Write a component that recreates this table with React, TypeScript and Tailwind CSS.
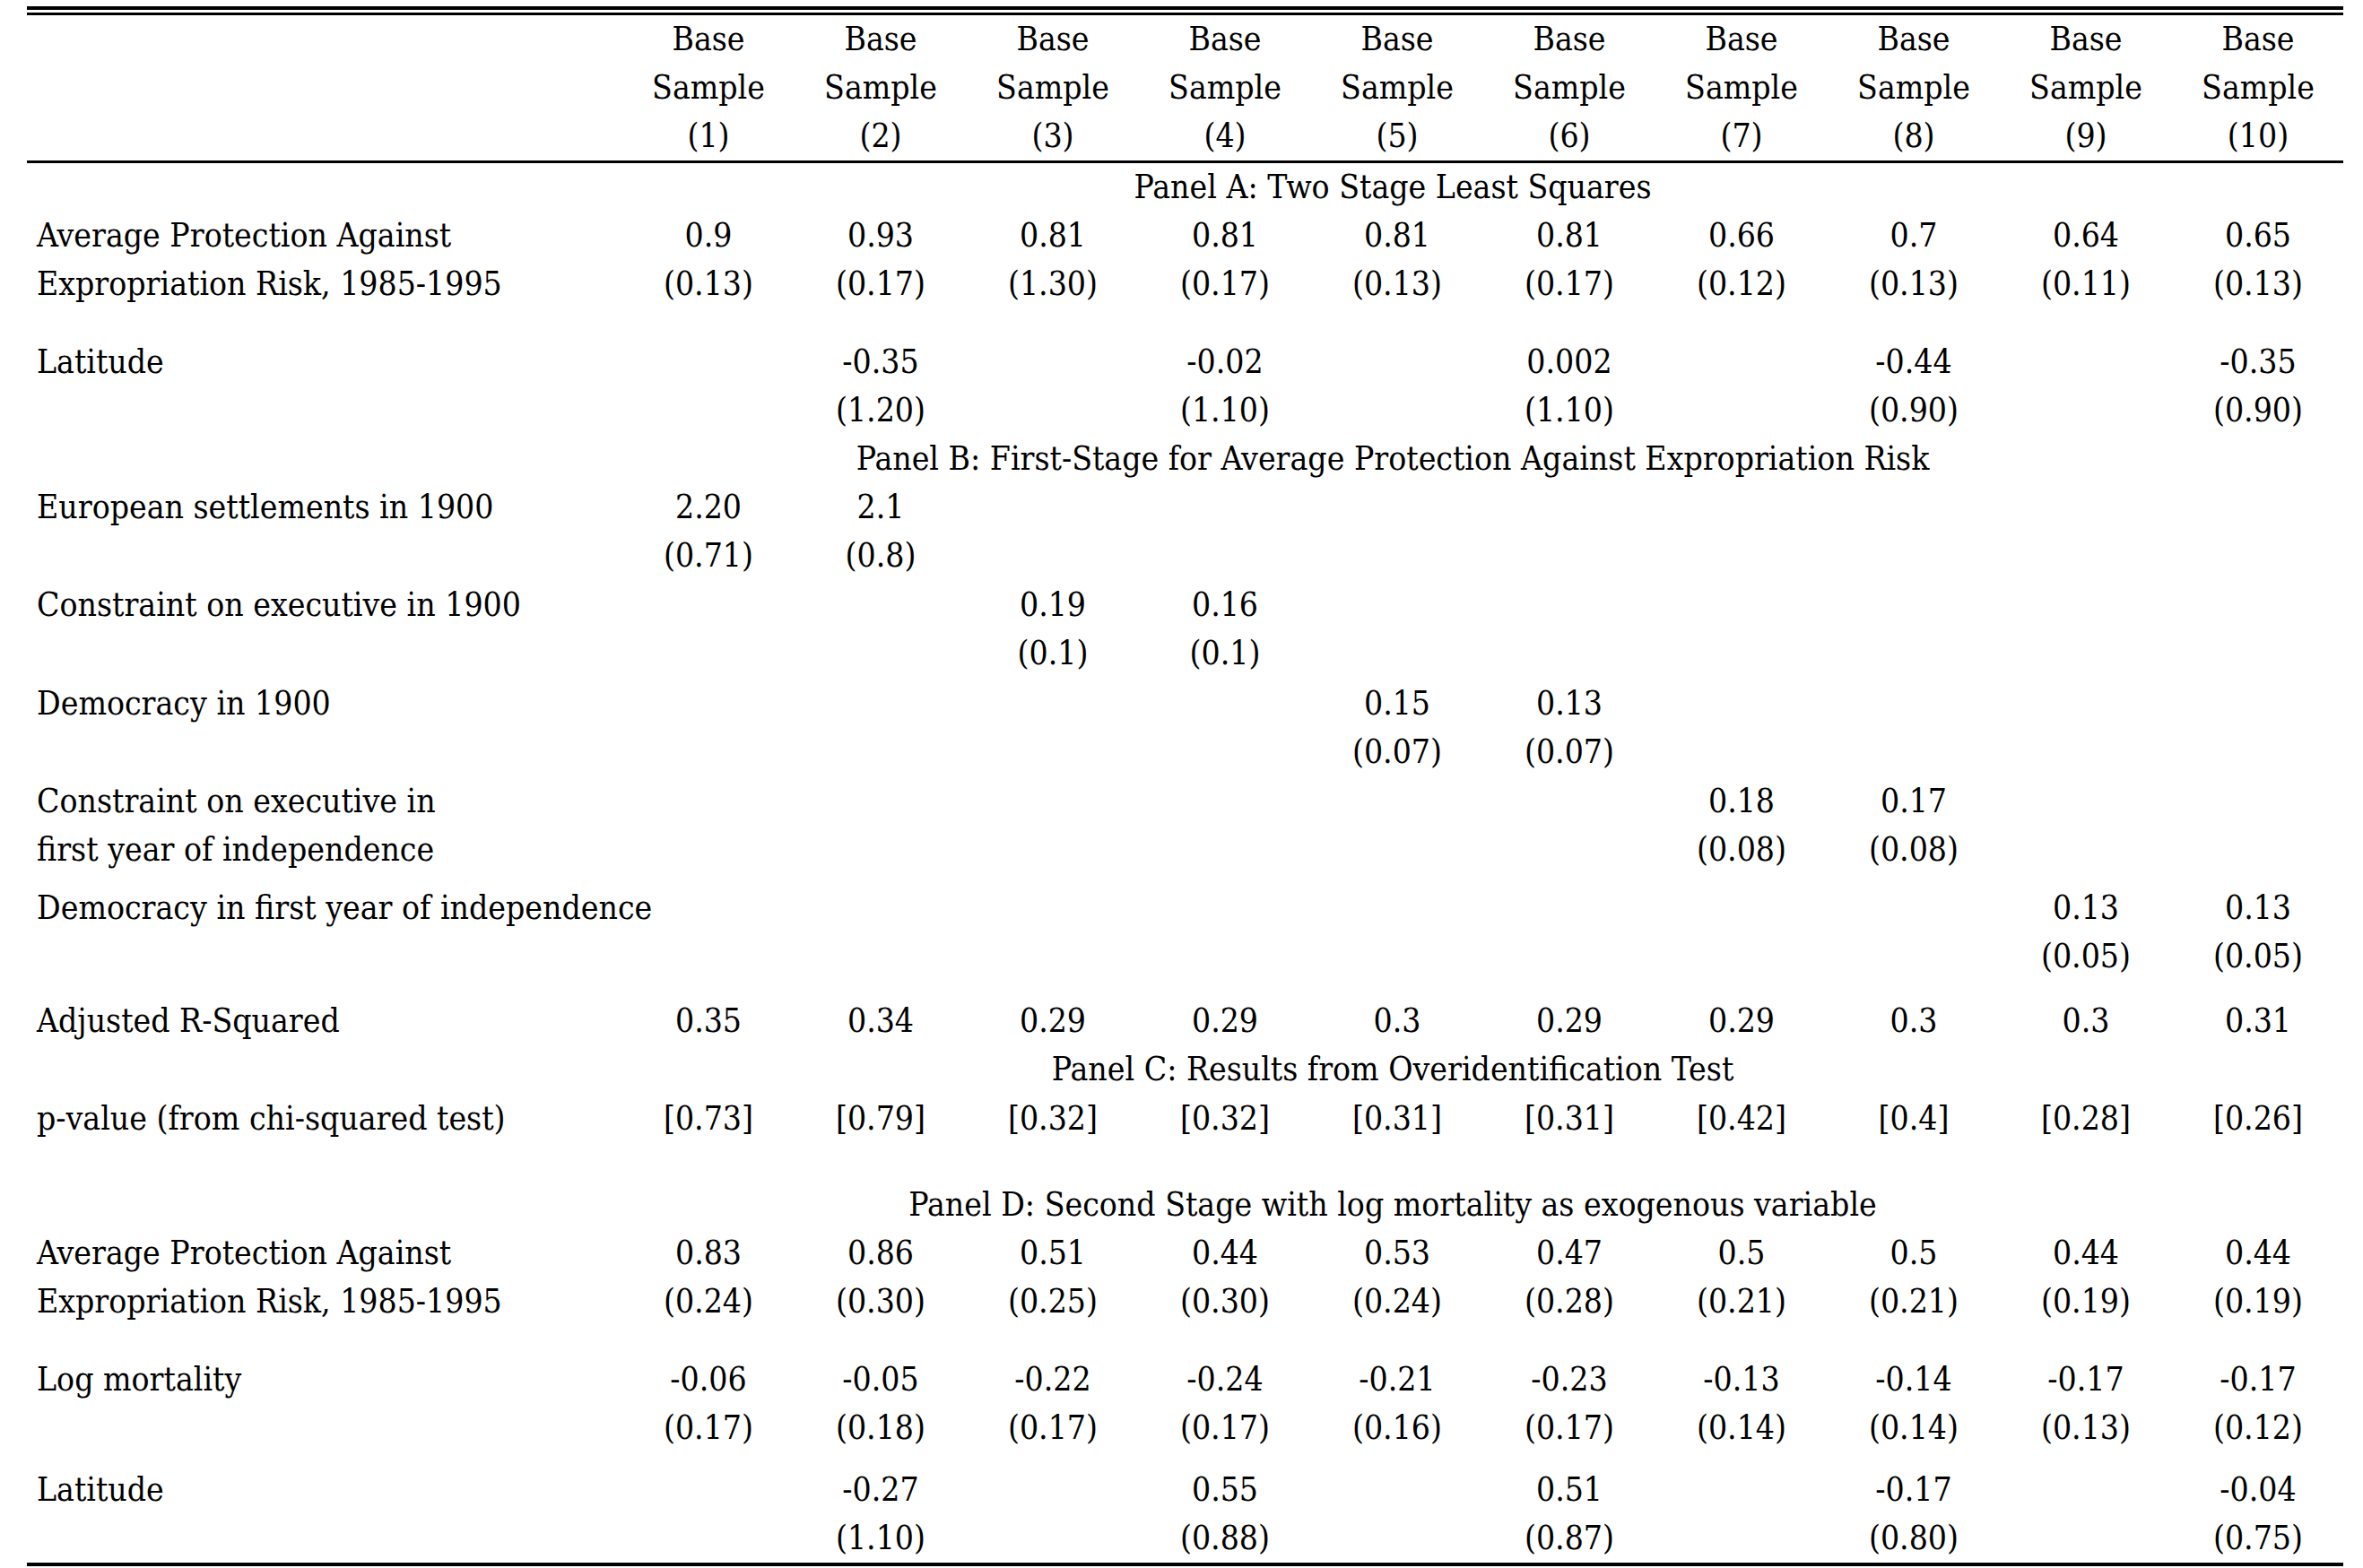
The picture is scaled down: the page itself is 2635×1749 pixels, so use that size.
type Row =
  | { kind: "title"; text: string; gap: string }
  | { kind: "data"; label: string[]; coef: string[]; se?: string[]; gap: string }

const e = ""

const rows: Row[] = [
  { kind: "title", text: "Panel A: Two Stage Least Squares", gap: "" },
  {
    kind: "data",
    label: ["Average Protection Against", "Expropriation Risk, 1985-1995"],
    coef: ["0.9", "0.93", "0.81", "0.81", "0.81", "0.81", "0.66", "0.7", "0.64", "0.65"],
    se: ["(0.13)", "(0.17)", "(1.30)", "(0.17)", "(0.13)", "(0.17)", "(0.12)", "(0.13)", "(0.11)", "(0.13)"],
    gap: "",
  },
  {
    kind: "data",
    label: ["Latitude"],
    coef: [e, "-0.35", e, "-0.02", e, "0.002", e, "-0.44", e, "-0.35"],
    se: [e, "(1.20)", e, "(1.10)", e, "(1.10)", e, "(0.90)", e, "(0.90)"],
    gap: "mt-[33px]",
  },
  { kind: "title", text: "Panel B: First-Stage for Average Protection Against Expropriation Risk", gap: "" },
  {
    kind: "data",
    label: ["European settlements in 1900"],
    coef: ["2.20", "2.1", e, e, e, e, e, e, e, e],
    se: ["(0.71)", "(0.8)", e, e, e, e, e, e, e, e],
    gap: "",
  },
  {
    kind: "data",
    label: ["Constraint on executive in 1900"],
    coef: [e, e, "0.19", "0.16", e, e, e, e, e, e],
    se: [e, e, "(0.1)", "(0.1)", e, e, e, e, e, e],
    gap: "mt-[1px]",
  },
  {
    kind: "data",
    label: ["Democracy in 1900"],
    coef: [e, e, e, e, "0.15", "0.13", e, e, e, e],
    se: [e, e, e, e, "(0.07)", "(0.07)", e, e, e, e],
    gap: "mt-[2px]",
  },
  {
    kind: "data",
    label: ["Constraint on executive in", "first year of independence"],
    coef: [e, e, e, e, e, e, "0.18", "0.17", e, e],
    se: [e, e, e, e, e, e, "(0.08)", "(0.08)", e, e],
    gap: "mt-[1px]",
  },
  {
    kind: "data",
    label: ["Democracy in first year of independence"],
    coef: [e, e, e, e, e, e, e, e, "0.13", "0.13"],
    se: [e, e, e, e, e, e, e, e, "(0.05)", "(0.05)"],
    gap: "mt-[11px]",
  },
  {
    kind: "data",
    label: ["Adjusted R-Squared"],
    coef: ["0.35", "0.34", "0.29", "0.29", "0.3", "0.29", "0.29", "0.3", "0.3", "0.31"],
    gap: "mt-[18px]",
  },
  { kind: "title", text: "Panel C: Results from Overidentification Test", gap: "" },
  {
    kind: "data",
    label: ["p-value (from chi-squared test)"],
    coef: ["[0.73]", "[0.79]", "[0.32]", "[0.32]", "[0.31]", "[0.31]", "[0.42]", "[0.4]", "[0.28]", "[0.26]"],
    gap: "mt-[1px]",
  },
  { kind: "title", text: "Panel D: Second Stage with log mortality as exogenous variable", gap: "mt-[42px]" },
  {
    kind: "data",
    label: ["Average Protection Against", "Expropriation Risk, 1985-1995"],
    coef: ["0.83", "0.86", "0.51", "0.44", "0.53", "0.47", "0.5", "0.5", "0.44", "0.44"],
    se: ["(0.24)", "(0.30)", "(0.25)", "(0.30)", "(0.24)", "(0.28)", "(0.21)", "(0.21)", "(0.19)", "(0.19)"],
    gap: "",
  },
  {
    kind: "data",
    label: ["Log mortality"],
    coef: ["-0.06", "-0.05", "-0.22", "-0.24", "-0.21", "-0.23", "-0.13", "-0.14", "-0.17", "-0.17"],
    se: ["(0.17)", "(0.18)", "(0.17)", "(0.17)", "(0.16)", "(0.17)", "(0.14)", "(0.14)", "(0.13)", "(0.12)"],
    gap: "mt-[33px]",
  },
  {
    kind: "data",
    label: ["Latitude"],
    coef: [e, "-0.27", e, "0.55", e, "0.51", e, "-0.17", e, "-0.04"],
    se: [e, "(1.10)", e, "(0.88)", e, "(0.87)", e, "(0.80)", e, "(0.75)"],
    gap: "mt-[15px]",
  },
]

const cols = ["1", "2", "3", "4", "5", "6", "7", "8", "9", "10"]
const grid = "grid grid-cols-[664px_repeat(10,192px)]"

function Cell({ lines }: { lines: string[] }) {
  return (
    <div className="text-center">
      {lines.map((l, i) => (
        <div key={i} className="h-[54px] whitespace-nowrap">
          {l}
        </div>
      ))}
    </div>
  )
}

export default function App() {
  return (
    <div className="min-h-screen bg-white text-black">
      <div
        className="ml-[30px] w-[2583px] pt-[7px] text-[37px] leading-[54px] font-stretch-condensed"
        style={{ fontFamily: '"DejaVu Serif Condensed", "DejaVu Serif", serif' }}
      >
        {/* double top rule */}
        <div className="h-[4px] bg-black" />
        <div className="mt-[3px] h-[3px] bg-black" />

        {/* column headers */}
        <div className={grid}>
          <div />
          {cols.map((c) => (
            <Cell key={c} lines={["Base", "Sample", `(${c})`]} />
          ))}
        </div>
        <div className="h-[3px] bg-black" />

        {rows.map((r, i) =>
          r.kind === "title" ? (
            <div key={i} className={`${grid} ${r.gap}`}>
              <div />
              <div className="col-span-9 pr-[10px] text-center whitespace-nowrap">{r.text}</div>
            </div>
          ) : (
            <div key={i} className={`${grid} ${r.gap}`}>
              <div className="pl-[11px]">
                {r.label.map((l, j) => (
                  <div key={j} className="h-[54px] whitespace-nowrap">
                    {l}
                  </div>
                ))}
              </div>
              {r.coef.map((c, j) => (
                <Cell key={j} lines={r.se ? [c, r.se[j]] : [c]} />
              ))}
            </div>
          )
        )}

        <div className="h-[4px] bg-black" />
      </div>
    </div>
  )
}
